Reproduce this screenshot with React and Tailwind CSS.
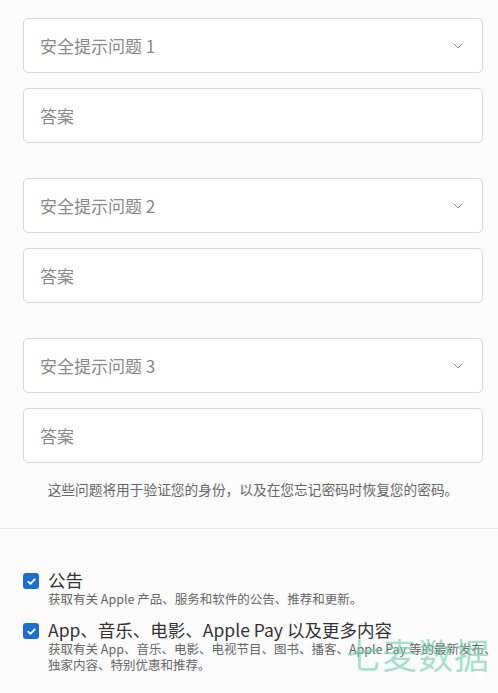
import { ChevronDown } from 'lucide-react'

const font = { fontFamily: '"Noto Sans CJK SC", "Noto Sans", sans-serif' }

function SelectField({ label }) {
  return (
    <div className="h-[55px] bg-white border border-[#d6d6d6] rounded-[5px] flex items-center justify-between pl-4 pr-4">
      <span className="text-[17px] text-[#888888]">{label}</span>
      <ChevronDown className="w-4 h-4 text-[#8a8a8a]" strokeWidth={1.5} />
    </div>
  )
}

function AnswerField() {
  return (
    <div className="h-[55px] bg-white border border-[#d6d6d6] rounded-[5px] flex items-center pl-4">
      <span className="text-[17px] text-[#888888]">答案</span>
    </div>
  )
}

function Check({ title, children }) {
  return (
    <div className="flex gap-[9px]">
      <div className="mt-[4px] w-4 h-4 rounded-[3px] bg-[#1a6fd1] flex items-center justify-center shrink-0">
        <svg viewBox="0 0 12 12" className="w-[11px] h-[11px]" fill="none" stroke="white" strokeWidth="2" strokeLinecap="round" strokeLinejoin="round">
          <path d="M2.5 6.2l2.3 2.3 4.7-4.9" />
        </svg>
      </div>
      <div>
        <div className="text-[17.5px] leading-[22px] text-[#333333] whitespace-nowrap">{title}</div>
        <div className="text-[12.5px] leading-[16px] text-[#666666] whitespace-nowrap">{children}</div>
      </div>
    </div>
  )
}

export default function App() {
  return (
    <div className="relative w-[498px] h-[693px] bg-[#fbfbfb] overflow-hidden" style={font}>
      <div className="px-[23px] pt-[18px] pr-[15px]">
        <div className="flex flex-col gap-[15px]">
          <SelectField label="安全提示问题 1" />
          <AnswerField />
        </div>
        <div className="flex flex-col gap-[15px] mt-[35px]">
          <SelectField label="安全提示问题 2" />
          <AnswerField />
        </div>
        <div className="flex flex-col gap-[15px] mt-[35px]">
          <SelectField label="安全提示问题 3" />
          <AnswerField />
        </div>
        <p className="mt-[17px] text-center text-[13.7px] leading-[18px] text-[#666666] whitespace-nowrap">
          这些问题将用于验证您的身份，以及在您忘记密码时恢复您的密码。
        </p>
      </div>
      <div className="mt-[30px] border-t border-[#e6e6e6]" />
      <div className="px-[23px] pt-[40px] flex flex-col gap-[12px]">
        <Check title="公告">获取有关 Apple 产品、服务和软件的公告、推荐和更新。</Check>
        <Check title="App、音乐、电影、Apple Pay 以及更多内容">
          获取有关 App、音乐、电影、电视节目、图书、播客、Apple Pay 等的最新发布、<br />独家内容、特别优惠和推荐。
        </Check>
      </div>
      <div className="absolute left-[346px] top-[636px] text-[35px] leading-none tracking-[1px] text-[#6fcfae] opacity-60 whitespace-nowrap pointer-events-none">
        七麦数据
      </div>
    </div>
  )
}
